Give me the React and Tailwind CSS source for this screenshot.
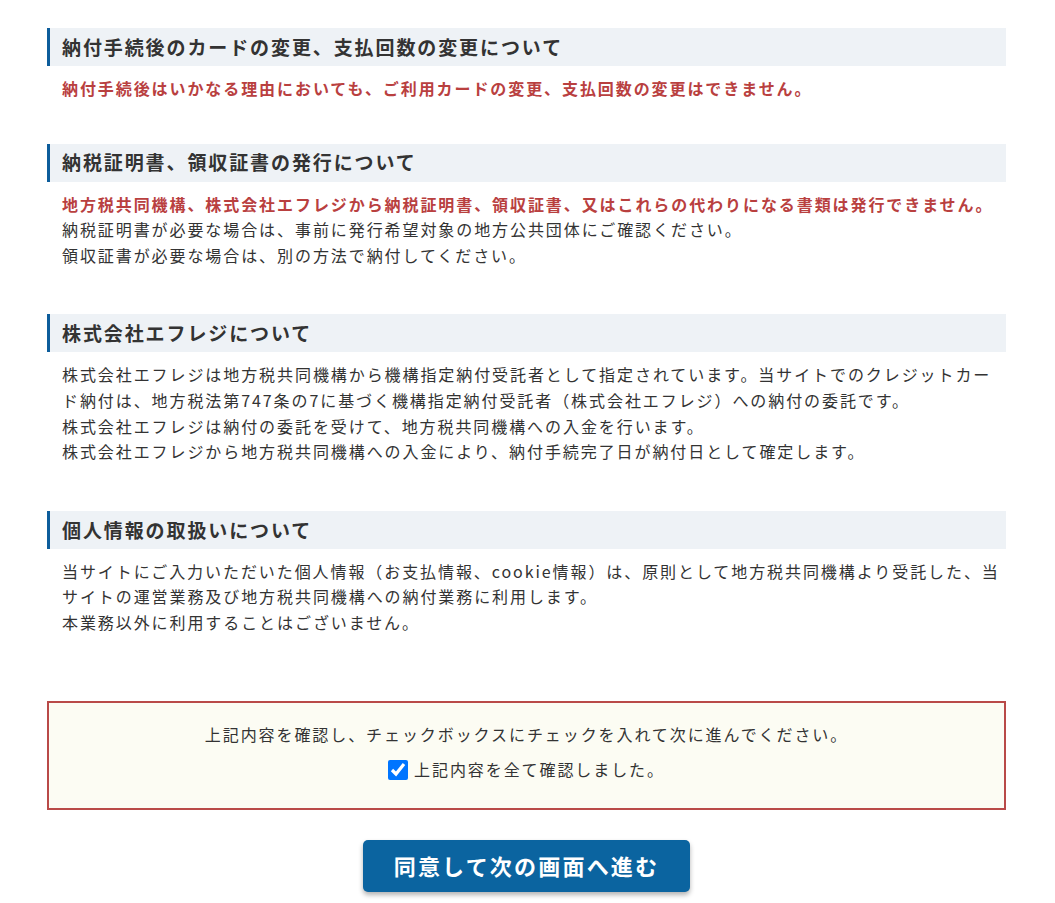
const font = { fontFamily: '"Noto Sans CJK JP", "Noto Sans", sans-serif' }

function Heading({ children }) {
  return (
    <h2 className="h-[38px] flex items-center bg-[#eef2f6] border-l-[3px] border-[#0d5d9b] pl-[12px] text-[19px] font-bold tracking-[0.1em] text-[#333333]">
      {children}
    </h2>
  )
}

function Section({ title, children, className = '' }) {
  return (
    <section className={className}>
      <Heading>{title}</Heading>
      <div className="mt-[10px] pl-[15px] pr-[4px] text-[16px] leading-[1.6] tracking-[0.12em] text-[#333333]">
        {children}
      </div>
    </section>
  )
}

export default function App() {
  return (
    <div style={font} className="bg-white min-h-[903px] w-[1055px] pt-[28px] pb-[10px]">
      <div className="ml-[47px] w-[959px]">
        <Section title="納付手続後のカードの変更、支払回数の変更について">
          <p className="font-bold text-[#b9403f]">
            納付手続後はいかなる理由においても、ご利用カードの変更、支払回数の変更はできません。
          </p>
        </Section>

        <Section title="納税証明書、領収証書の発行について" className="mt-[42px]">
          <p className="font-bold text-[#b9403f]">
            地方税共同機構、株式会社エフレジから納税証明書、領収証書、又はこれらの代わりになる書類は発行できません。
          </p>
          <p>納税証明書が必要な場合は、事前に発行希望対象の地方公共団体にご確認ください。</p>
          <p>領収証書が必要な場合は、別の方法で納付してください。</p>
        </Section>

        <Section title="株式会社エフレジについて" className="mt-[46px]">
          <p>
            株式会社エフレジは地方税共同機構から機構指定納付受託者として指定されています。当サイトでのクレジットカード納付は、地方税法第747条の7に基づく機構指定納付受託者（株式会社エフレジ）への納付の委託です。
          </p>
          <p>株式会社エフレジは納付の委託を受けて、地方税共同機構への入金を行います。</p>
          <p>株式会社エフレジから地方税共同機構への入金により、納付手続完了日が納付日として確定します。</p>
        </Section>

        <Section title="個人情報の取扱いについて" className="mt-[46px]">
          <p>
            当サイトにご入力いただいた個人情報（お支払情報、cookie情報）は、原則として地方税共同機構より受託した、当サイトの運営業務及び地方税共同機構への納付業務に利用します。
          </p>
          <p>本業務以外に利用することはございません。</p>
        </Section>

        <div className="mt-[65px] border-2 border-[#b94a48] bg-[#fcfcf3] pt-[19px] pb-[21px] text-center text-[16px] leading-[1.6] tracking-[0.12em] text-[#333333]">
          <p>上記内容を確認し、チェックボックスにチェックを入れて次に進んでください。</p>
          <label className="mt-[10px] inline-flex items-center gap-[6px]">
            <input type="checkbox" defaultChecked className="w-[20px] h-[20px] accent-[#0075ff] m-0" />
            <span>上記内容を全て確認しました。</span>
          </label>
        </div>

        <div className="mt-[30px] flex justify-center">
          <button
            type="button"
            className="w-[327px] h-[52px] rounded-[5px] bg-[#0b64a0] text-white text-[22px] font-bold tracking-[0.1em] shadow-[0_3px_5px_rgba(0,0,0,0.3)]"
          >
            同意して次の画面へ進む
          </button>
        </div>
      </div>
    </div>
  )
}
